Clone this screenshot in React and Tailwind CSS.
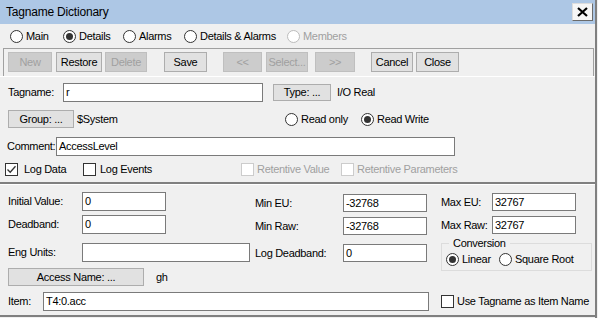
import React from 'react';

function Radio({ checked, disabled, label, className }) {
  return (
    <div className={`flex items-center h-[13px] ${className || ''}`}>
      <span className={`w-[13px] h-[13px] shrink-0 rounded-full border bg-white flex items-center justify-center ${disabled ? 'border-[#bcbcbc]' : 'border-[#333333]'}`}>
        {checked && <span className="w-[7px] h-[7px] rounded-full bg-[#333333]" />}
      </span>
      <span className={`ml-[3px] whitespace-nowrap ${disabled ? 'text-[#a0a0a0]' : ''}`}>{label}</span>
    </div>
  );
}

function Check({ checked, disabled, label, className, gap }) {
  return (
    <div className={`flex items-center h-[13px] ${className || ''}`}>
      <span className={`w-[13px] h-[13px] shrink-0 border bg-white flex items-center justify-center ${disabled ? 'border-[#cccccc]' : 'border-[#333333]'}`}>
        {checked && (
          <svg width="11" height="11" viewBox="0 0 11 11">
            <polyline points="1.5,5.5 4.2,8.3 9.5,2.2" fill="none" stroke="#333333" strokeWidth="1.3" />
          </svg>
        )}
      </span>
      <span className={`whitespace-nowrap ${gap || 'ml-[3px]'} ${disabled ? 'text-[#a0a0a0]' : ''}`}>{label}</span>
    </div>
  );
}

function Btn({ children, disabled, className }) {
  return (
    <div className={`flex items-center justify-center border whitespace-nowrap ${disabled ? 'bg-[#cccccc] border-[#bfbfbf] text-[#a0a0a0]' : 'bg-[#e1e1e1] border-[#adadad]'} ${className || ''}`}>
      {children}
    </div>
  );
}

function Field({ value, className }) {
  return (
    <div className={`bg-white border border-[#7a7a7a] flex items-center pl-[2px] ${className || ''}`}>
      {value}
    </div>
  );
}

export default function App() {
  return (
    <div className="w-[598px] h-[318px] bg-[#f0f0f0] overflow-hidden flex font-['Liberation_Sans',Arial,sans-serif] text-[11px] tracking-[-0.3px] leading-none text-black">
      <div className="w-[595px] flex flex-col">
        {/* title bar */}
        <div className="h-[24px] shrink-0 bg-[#adc7e5] flex items-center pl-[6px] pr-[2px]">
          <span className="text-[12px] tracking-[-0.2px]">Tagname Dictionary</span>
          <div className="ml-auto w-[21px] h-[18px] bg-[#f6f6f6] border border-t-[#dddddd] border-l-[#dddddd] border-r-[#6b6b6b] border-b-[#6b6b6b] flex items-center justify-center">
            <svg width="11" height="10" viewBox="0 0 11 10">
              <path d="M1 1 L10 9 M10 1 L1 9" stroke="#000000" strokeWidth="2.2" />
            </svg>
          </div>
        </div>

        {/* view radios */}
        <div className="h-[24px] shrink-0 flex pt-[6px] pl-[10px]">
          <Radio label="Main" className="w-[53px]" />
          <Radio label="Details" checked className="w-[60px]" />
          <Radio label="Alarms" className="w-[61px]" />
          <Radio label="Details & Alarms" className="w-[103px]" />
          <Radio label="Members" disabled />
        </div>

        {/* toolbar */}
        <div className="h-[28px] shrink-0 ml-[3px] w-[591px] border-t border-l border-r border-[#a0a0a0] flex pt-[3px] pl-[4px]">
          <Btn disabled className="w-[44px] h-[20px]">New</Btn>
          <Btn className="w-[46px] h-[20px] ml-[4px]">Restore</Btn>
          <Btn disabled className="w-[42px] h-[20px] ml-[3px]">Delete</Btn>
          <Btn className="w-[43px] h-[20px] ml-[17px]">Save</Btn>
          <Btn disabled className="w-[39px] h-[20px] ml-[16px]">&lt;&lt;</Btn>
          <Btn disabled className="w-[42px] h-[20px] ml-[4px]">Select...</Btn>
          <Btn disabled className="w-[40px] h-[20px] ml-[7px]">&gt;&gt;</Btn>
          <Btn className="w-[42px] h-[20px] ml-[16px]">Cancel</Btn>
          <Btn className="w-[43px] h-[20px] ml-[3px]">Close</Btn>
        </div>

        {/* top panel */}
        <div className="h-[108px] shrink-0 border-t border-white border-b-2 border-b-[#808080] flex flex-col">
          <div className="flex items-center h-[19px] mt-[6px] pl-[8px]">
            <span className="w-[55px]">Tagname:</span>
            <Field value="r" className="w-[200px] h-[19px]" />
            <Btn className="w-[58px] h-[17px] ml-[10px]">Type: ...</Btn>
            <span className="ml-[6px]">I/O Real</span>
          </div>
          <div className="flex items-center h-[18px] mt-[8px] pl-[8px]">
            <div className="w-[277px] flex items-center">
              <Btn className="w-[66px] h-[18px]">Group: ...</Btn>
              <span className="ml-[3px]">$System</span>
            </div>
            <Radio label="Read only" className="w-[76px]" />
            <Radio label="Read Write" checked />
          </div>
          <div className="flex items-center h-[19px] mt-[9px] pl-[7px]">
            <span className="w-[49px]">Comment:</span>
            <Field value="AccessLevel" className="w-[399px] h-[19px]" />
          </div>
          <div className="flex items-center h-[13px] mt-[7px] pl-[5px]">
            <Check label="Log Data" checked gap="ml-[6px]" className="w-[78px]" />
            <Check label="Log Events" gap="ml-[4px]" className="w-[158px]" />
            <Check label="Retentive Value" disabled className="w-[100px]" />
            <Check label="Retentive Parameters" disabled />
          </div>
        </div>

        {/* bottom panel */}
        <div className="h-[133px] shrink-0 border-t border-white border-b-2 border-b-[#808080] flex flex-col">
          <div className="flex items-start mt-[7px]">
            {/* left column */}
            <div className="w-[247px] ml-[8px] flex flex-col">
              <div className="flex items-center h-[19px]">
                <span className="w-[74px]">Initial Value:</span>
                <Field value="0" className="w-[84px] h-[19px]" />
              </div>
              <div className="flex items-center h-[19px] mt-[4px]">
                <span className="w-[74px]">Deadband:</span>
                <Field value="0" className="w-[84px] h-[19px]" />
              </div>
              <div className="flex items-center h-[19px] mt-[9px]">
                <span className="w-[74px]">Eng Units:</span>
                <Field value="" className="w-[168px] h-[19px]" />
              </div>
              <div className="flex items-center h-[18px] mt-[6px]">
                <Btn className="w-[136px] h-[18px]">Access Name: ...</Btn>
                <span className="ml-[12px]">gh</span>
              </div>
            </div>

            {/* middle column */}
            <div className="w-[172px] flex flex-col mt-[2px]">
              <div className="flex items-center h-[18px]">
                <span className="w-[88px]">Min EU:</span>
                <Field value="-32768" className="w-[84px] h-[18px]" />
              </div>
              <div className="flex items-center h-[18px] mt-[5px]">
                <span className="w-[88px]">Min Raw:</span>
                <Field value="-32768" className="w-[84px] h-[18px]" />
              </div>
              <div className="flex items-center h-[18px] mt-[9px]">
                <span className="w-[88px]">Log Deadband:</span>
                <Field value="0" className="w-[84px] h-[18px]" />
              </div>
            </div>

            {/* right column */}
            <div className="w-[151px] ml-[14px] flex flex-col mt-[1px]">
              <div className="flex items-center h-[18px]">
                <span className="w-[51px]">Max EU:</span>
                <Field value="32767" className="w-[84px] h-[18px]" />
              </div>
              <div className="flex items-center h-[18px] mt-[5px]">
                <span className="w-[51px]">Max Raw:</span>
                <Field value="32767" className="w-[84px] h-[18px]" />
              </div>
              <fieldset className="mt-[3px] h-[34px] border border-[#dcdcdc] pl-[4px]">
                <legend className="px-[4px] leading-[13px] ml-[3px]">Conversion</legend>
                <div className="flex items-center mt-[3px]">
                  <Radio label="Linear" checked className="w-[53px]" />
                  <Radio label="Square Root" />
                </div>
              </fieldset>
            </div>
          </div>

          <div className="flex items-center h-[19px] mt-[6px] pl-[8px]">
            <span className="w-[35px]">Item:</span>
            <Field value="T4:0.acc" className="w-[386px] h-[19px]" />
            <Check label="Use Tagname as Item Name" className="ml-[12px]" />
          </div>
        </div>
      </div>
      <div className="w-[2px] h-full bg-[#808080]" />
    </div>
  );
}
